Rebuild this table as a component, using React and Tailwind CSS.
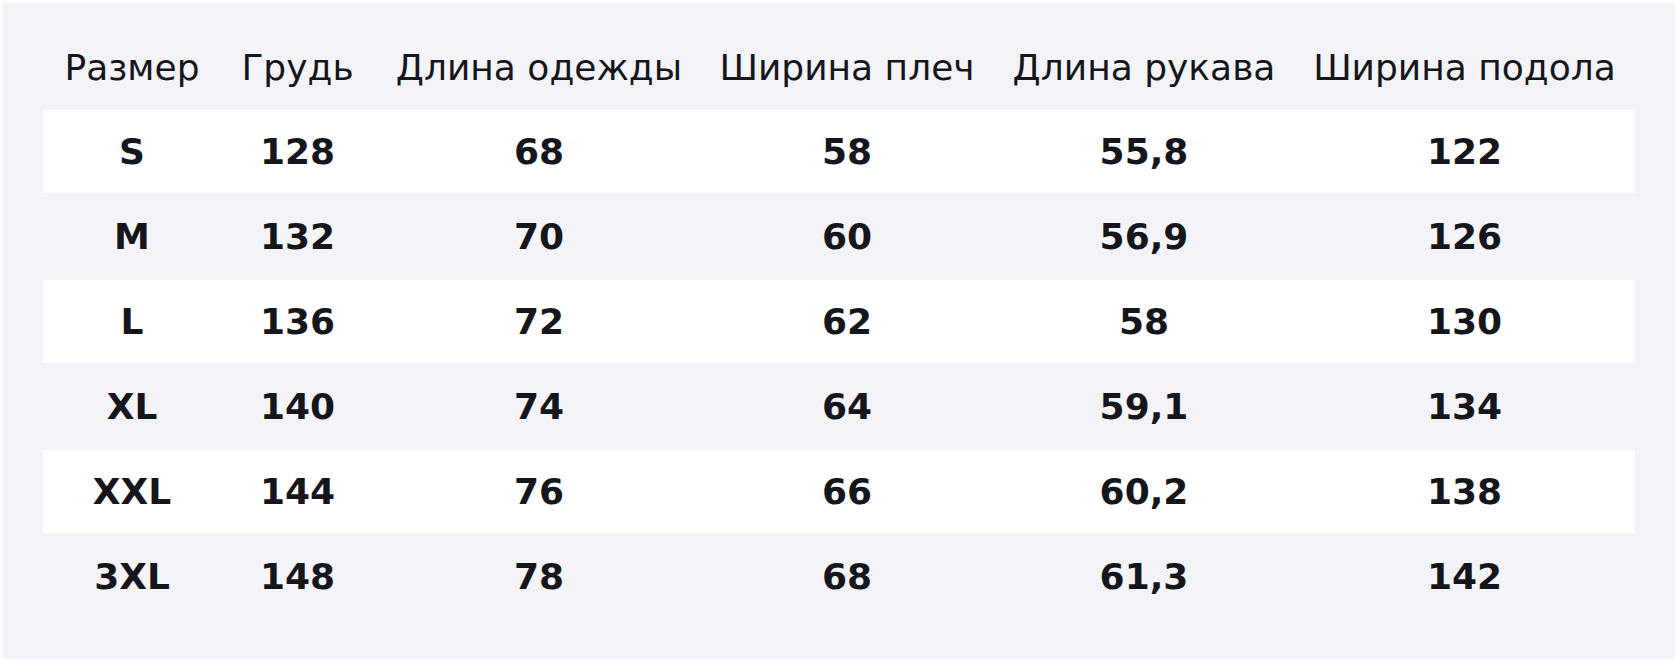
import React from "react";

const headers = ["Размер", "Грудь", "Длина одежды", "Ширина плеч", "Длина рукава", "Ширина подола"];
const rows = [
  ["S", "128", "68", "58", "55,8", "122"],
  ["M", "132", "70", "60", "56,9", "126"],
  ["L", "136", "72", "62", "58", "130"],
  ["XL", "140", "74", "64", "59,1", "134"],
  ["XXL", "144", "76", "66", "60,2", "138"],
  ["3XL", "148", "78", "68", "61,3", "142"],
];
const widths = ["w-[178px]", "w-[153px]", "w-[330px]", "w-[286px]", "w-[308px]", "w-[337px] pr-[4px]"];

export default function App() {
  return (
    <div className="min-h-screen bg-white p-[3px]" style={{ fontFamily: '"DejaVu Sans", sans-serif' }}>
      <div className="w-[1672px] h-[656px] bg-[#f4f4f8] px-10 pt-10 text-[#15161c]">
        <div className="flex w-[1592px] pt-[4px] pb-[21px]">
          {headers.map((h, i) => (
            <div key={h} className={`${widths[i]} shrink-0 text-center text-[36px] leading-[42px] whitespace-nowrap`}>
              {h}
            </div>
          ))}
        </div>
        <div className="flex flex-col w-[1592px]">
          {rows.map((r, ri) => (
            <div
              key={r[0]}
              className={`flex items-center ${ri % 2 === 0 ? "bg-white h-[83px]" : "h-[87px]"}`}
            >
              {r.map((c, ci) => (
                <div key={ci} className={`${widths[ci]} shrink-0 text-center text-[36px] font-bold leading-[42px]`}>
                  {c}
                </div>
              ))}
            </div>
          ))}
        </div>
      </div>
    </div>
  );
}
